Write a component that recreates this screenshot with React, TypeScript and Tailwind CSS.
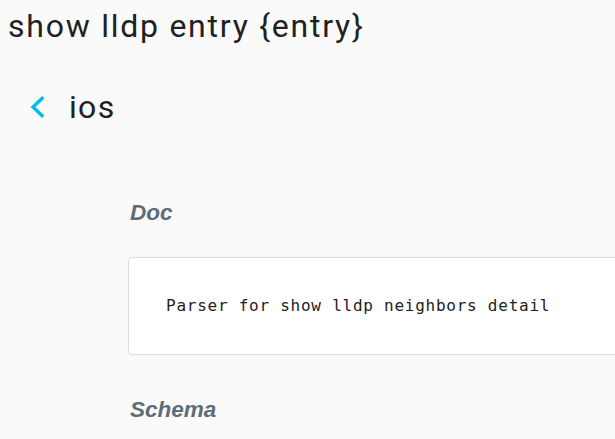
import React from 'react';

const Section: React.FC<{ title: string; children?: React.ReactNode }> = ({ title, children }) => (
  <div>
    <h3 className="pl-[2px] text-[22.5px] leading-[28px] font-bold italic text-[#5d6d77] font-['Liberation_Sans',Arial,sans-serif]">{title}</h3>
    {children}
  </div>
);

export default function App() {
  return (
    <div className="min-h-[439px] w-[615px] overflow-hidden bg-[#fafafa] font-['Roboto',sans-serif] text-[#212121]">
      <h1 className="pl-[8px] pt-[4px] text-[32px] leading-[44px] tracking-[1.75px] font-normal">show lldp entry {'{entry}'}</h1>

      <div className="mt-[41px] flex items-center pl-[29px]">
        <svg width="16" height="22" viewBox="0 0 16 22" className="text-[#00bceb]">
          <path d="M13 2.5 L4 11 L13 19.5" fill="none" stroke="currentColor" strokeWidth="3.4" strokeLinecap="square" />
        </svg>
        <span className="ml-[24px] text-[32px] leading-[36px] tracking-[1.3px]">ios</span>
      </div>

      <div className="ml-[128px] mt-[74px] w-[600px]">
        <Section title="Doc">
          <div className="mt-[30px] flex h-[98px] items-center rounded-[4px] border border-[#dcdcdc] bg-white pl-[37px]">
            <pre className="font-['DejaVu_Sans_Mono',monospace] text-[16px] tracking-[0.75px] text-[#222]">Parser for show lldp neighbors detail</pre>
          </div>
        </Section>
        <div className="mt-[41px]">
          <Section title="Schema" />
        </div>
      </div>
    </div>
  );
}
